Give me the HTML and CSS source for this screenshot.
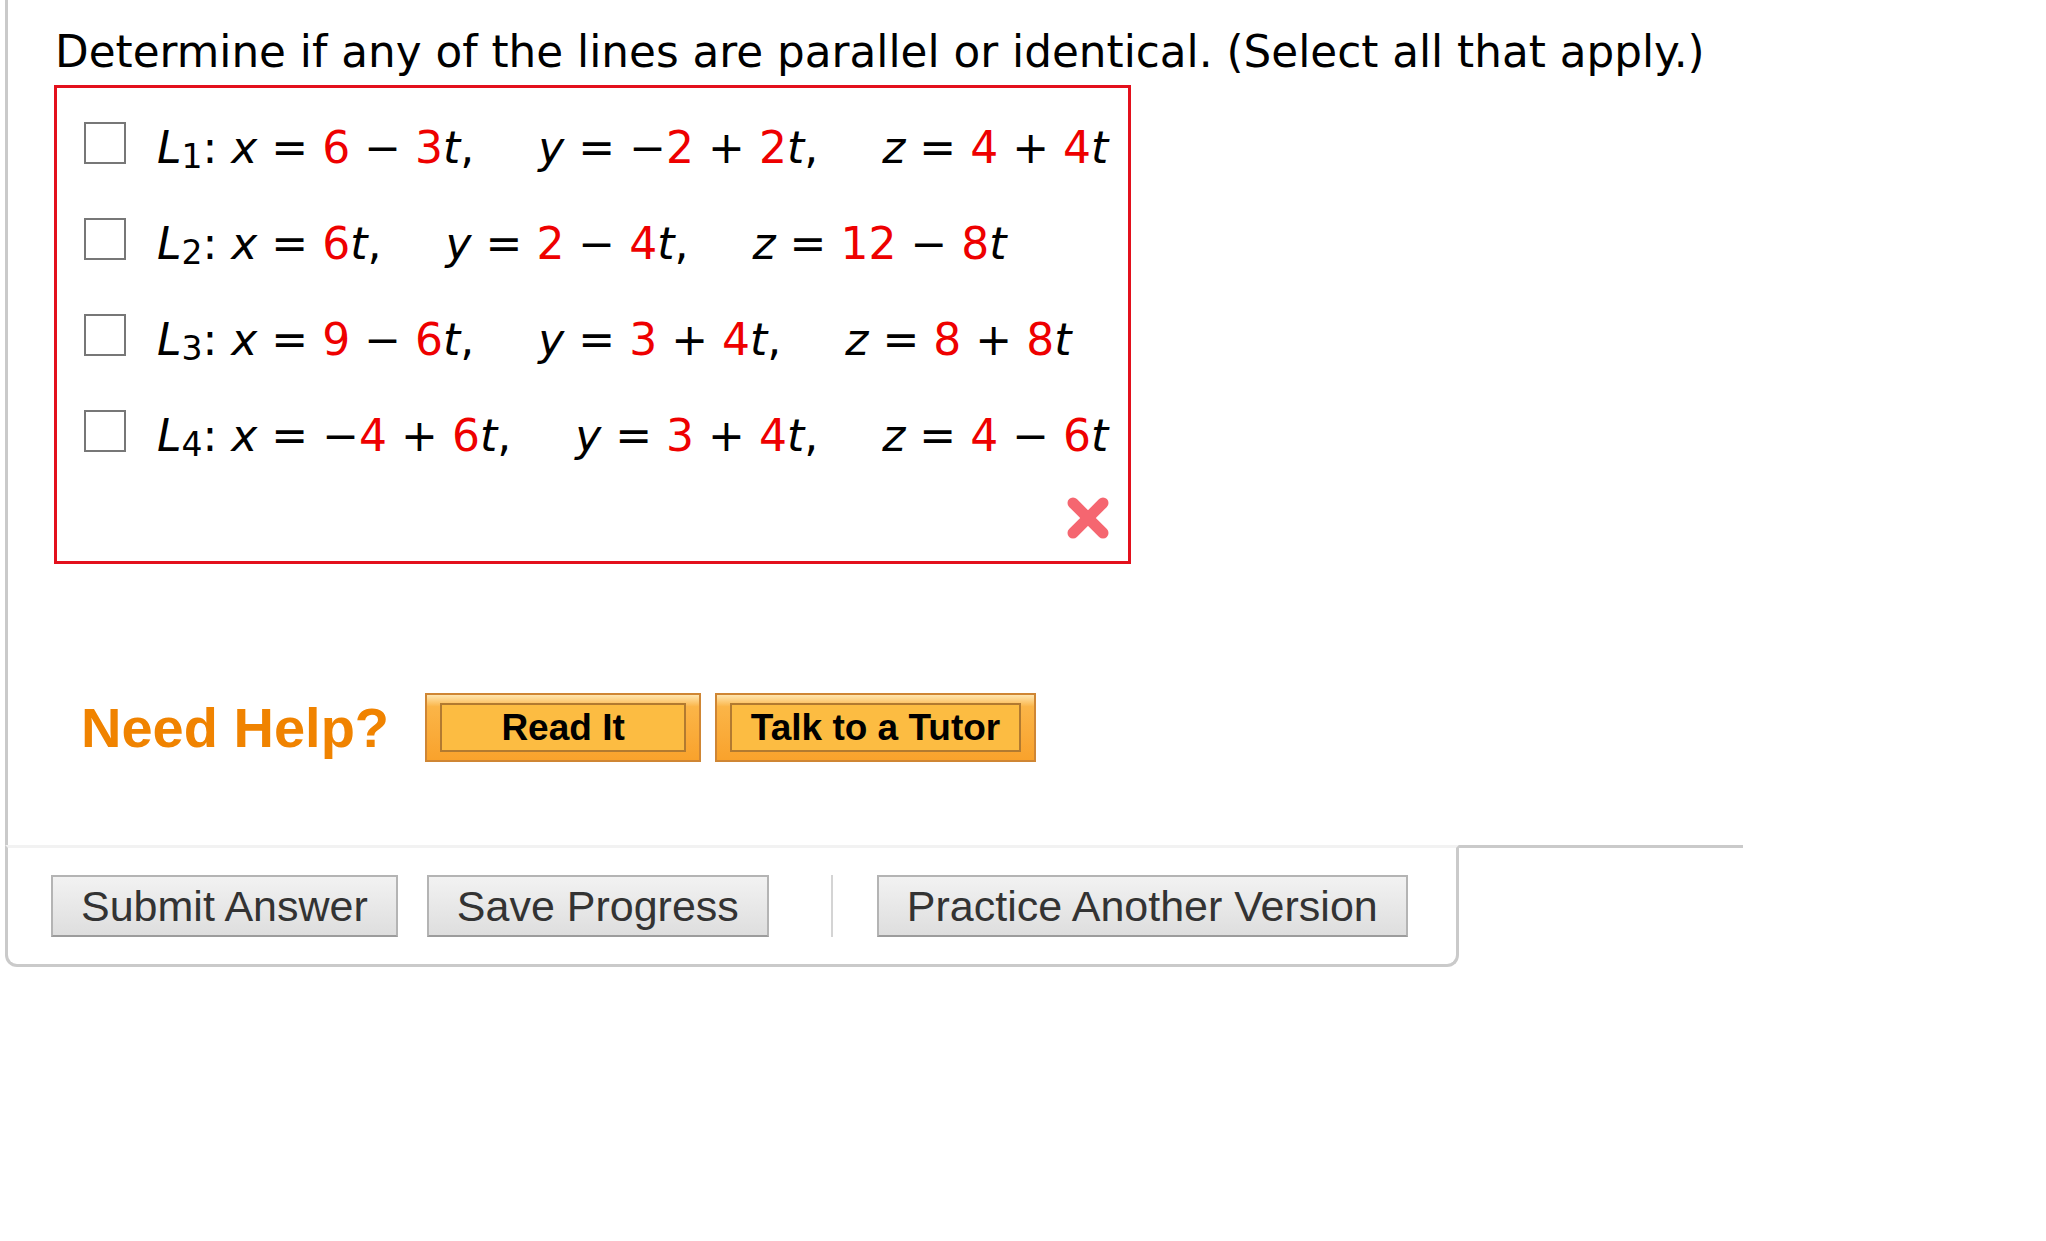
FILE: index.html
```html
<!DOCTYPE html>
<html lang="en">
<head>
  <meta charset="UTF-8">
  <title>Question</title>
  <link rel="stylesheet" href="styles.css">
</head>
<body>
  <div class="question">
    <p class="prompt">Determine if any of the lines are parallel or identical. (Select all that apply.)</p>

    <div class="answer">
      <ul class="choices">
        <li>
          <span class="box"></span>
          <span class="eq"><i>L</i><sub>1</sub>: <i>x</i> = <b>6</b> − <b>3</b><i>t</i>,</span>
          <span class="eq"><i>y</i> = −<b>2</b> + <b>2</b><i>t</i>,</span>
          <span class="eq"><i>z</i> = <b>4</b> + <b>4</b><i>t</i></span>
        </li>
        <li>
          <span class="box"></span>
          <span class="eq"><i>L</i><sub>2</sub>: <i>x</i> = <b>6</b><i>t</i>,</span>
          <span class="eq"><i>y</i> = <b>2</b> − <b>4</b><i>t</i>,</span>
          <span class="eq"><i>z</i> = <b>12</b> − <b>8</b><i>t</i></span>
        </li>
        <li>
          <span class="box"></span>
          <span class="eq"><i>L</i><sub>3</sub>: <i>x</i> = <b>9</b> − <b>6</b><i>t</i>,</span>
          <span class="eq"><i>y</i> = <b>3</b> + <b>4</b><i>t</i>,</span>
          <span class="eq"><i>z</i> = <b>8</b> + <b>8</b><i>t</i></span>
        </li>
        <li>
          <span class="box"></span>
          <span class="eq"><i>L</i><sub>4</sub>: <i>x</i> = −<b>4</b> + <b>6</b><i>t</i>,</span>
          <span class="eq"><i>y</i> = <b>3</b> + <b>4</b><i>t</i>,</span>
          <span class="eq"><i>z</i> = <b>4</b> − <b>6</b><i>t</i></span>
        </li>
      </ul>
      <div class="mark">
        <svg width="44" height="44" viewBox="0 0 44 44">
          <path d="M7 7 L37 37 M37 7 L7 37" stroke="#f2404c" stroke-opacity="0.8" stroke-width="11" stroke-linecap="round" fill="none"/>
        </svg>
      </div>
    </div>

    <div class="help">
      <span class="help-label">Need Help?</span>
      <button class="help-btn read"><span>Read It</span></button>
      <button class="help-btn tutor"><span>Talk to a Tutor</span></button>
    </div>
  </div>

  <div class="actions">
    <button class="btn">Submit Answer</button>
    <button class="btn">Save Progress</button>
    <span class="divider"></span>
    <button class="btn">Practice Another Version</button>
  </div>
</body>
</html>
```

FILE: styles.css
```css
body {
  margin: 0;
  background: #fff;
  color: #000;
  font-family: "DejaVu Sans", Verdana, sans-serif;
}

.question {
  width: 1689px;
  margin-left: 5px;
  padding: 26px 0 83px 46px;
  border-left: 3px solid #cacaca;
  border-bottom: 3px solid #cacaca;
}

.prompt {
  margin: 0 0 7px 1px;
  font-size: 43.7px;
  line-height: 52px;
}

/* answer box, red because it was marked wrong */
.answer {
  width: 1071px;
  border: 3px solid #e3101c;
}

.choices {
  list-style: none;
  margin: 0;
  padding: 32px 0 0 27px;
}

.choices li {
  display: flex;
  align-items: flex-start;
  height: 56px;
  margin-bottom: 40px;
  font-size: 44px;
  line-height: 56px;
  white-space: nowrap;
}

.choices li:last-child {
  margin-bottom: 0;
}

.box {
  flex: none;
  width: 38px;
  height: 38px;
  margin: 2px 31px 0 0;
  border: 2px solid #777;
  background: #fff;
}

.eq {
  margin-right: 64px;
}

.eq i {
  font-style: italic;
}

.eq b {
  font-weight: normal;
  color: #ee0000;
}

.eq sub {
  font-size: 33px;
  line-height: 0;
  vertical-align: -5px;
}

.mark {
  display: flex;
  justify-content: flex-end;
  padding: 32px 18px 21px 0;
}

.mark svg {
  display: block;
}

.help {
  display: flex;
  align-items: center;
  gap: 14px;
  margin: 129px 0 0 27px;
  height: 69px;
}

.help-label {
  margin-right: 22px;
  font-family: "Liberation Sans", Arial, sans-serif;
  font-weight: bold;
  font-size: 56px;
  color: #f08300;
}

.help-btn {
  height: 69px;
  padding: 8px 13px;
  border: 2px solid #cf8634;
  background: linear-gradient(#ffe6b0 0, #fbb548 18%, #f9a22c 100%);
  cursor: pointer;
}

.help-btn.read {
  width: 276px;
}

.help-btn.tutor {
  width: 321px;
}

.help-btn span {
  display: block;
  height: 49px;
  border: 2px solid #b27a30;
  background: #fcbc42;
  box-sizing: border-box;
  font-family: "Liberation Sans", Arial, sans-serif;
  font-weight: bold;
  font-size: 37px;
  line-height: 45px;
  color: #000;
  text-align: center;
}

.actions {
  display: inline-flex;
  align-items: center;
  margin: -3px 0 0 5px;
  padding: 27px 48px 27px 43px;
  border: 3px solid #cacaca;
  border-top-color: #f2f2f2;
  border-radius: 0 0 12px 12px;
  background: #fff;
}

.btn {
  height: 62px;
  padding: 0 28px;
  border: 2px solid #b4b4b4;
  border-bottom-color: #9c9c9c;
  background: linear-gradient(#f2f2f2, #dedede);
  font-family: "Liberation Sans", Arial, sans-serif;
  font-size: 43px;
  color: #333;
  cursor: pointer;
}

.btn + .btn {
  margin-left: 29px;
}

.divider {
  width: 2px;
  height: 62px;
  margin: 0 44px 0 62px;
  background: #d4d4d4;
}
```
